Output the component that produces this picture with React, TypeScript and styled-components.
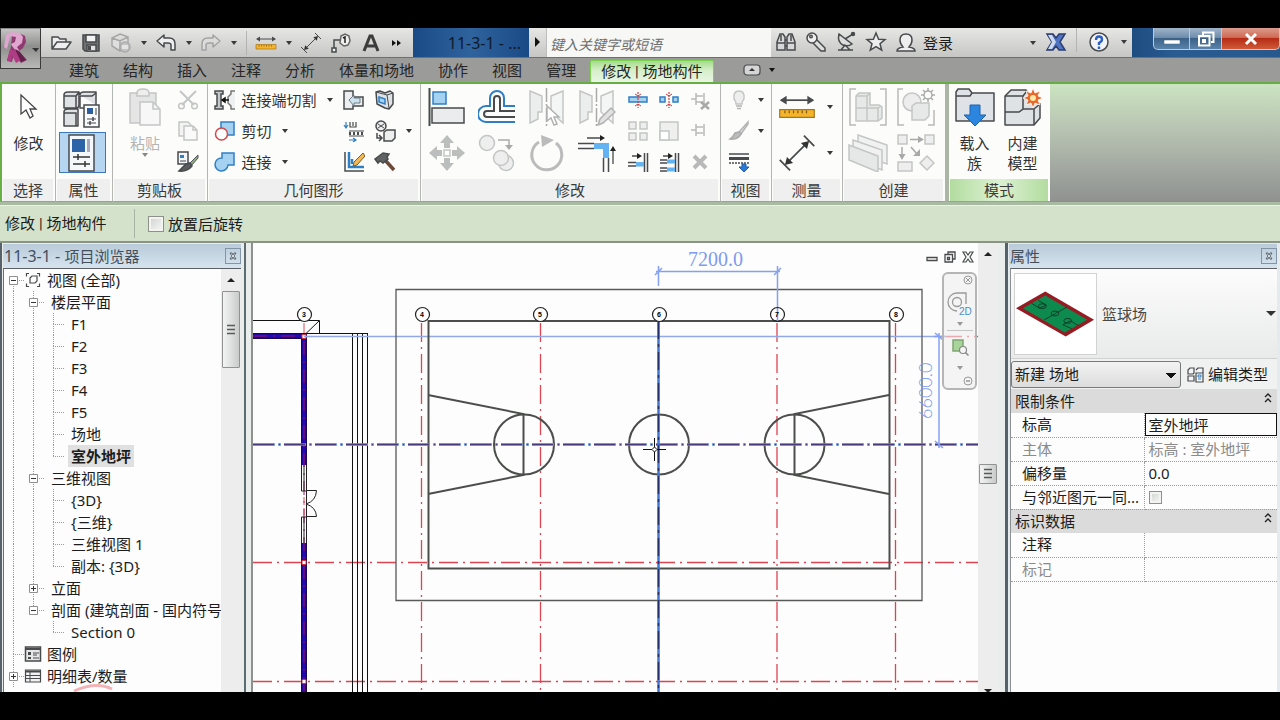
import React from "react";
import styled, { createGlobalStyle, css } from "styled-components";

const Global = createGlobalStyle`
  * { box-sizing: border-box; }
  html, body { margin: 0; background: #000; }
  body, button, input, select, table {
    font-family: "Noto Sans", "Noto Sans CJK SC", sans-serif;
    font-size: 15px;
    line-height: 22px;
    color: #1c1c1c;
  }
  button { border: 0; padding: 0; background: none; cursor: pointer; }
`;

const DARK = "#484a4c";
const PALE = "#c4c6c5";
const BLUE = "#2f7fc4";
const SKY = "#a5d2f0";

/* ---------- page frame ---------- */

const Page = styled.div`
  display: flex;
  flex-direction: column;
  height: 100vh;
  padding: 28px 0;
  background: #000;
  overflow: hidden;
`;

const Header = styled.header`
  display: flex;
  flex: none;
  background: #9b9b9a;
`;

const AppButton = styled.button`
  display: flex;
  align-items: center;
  justify-content: center;
  width: 41px;
  height: 41px;
  flex: none;
  border: 1px solid #3a3a3a;
  border-top-color: #888;
  background: linear-gradient(#c4c4c3, #8e8e8d 45%, #b9b9b8);
`;

const HeaderRows = styled.div`
  flex: 1;
  min-width: 0;
`;

const TitleBar = styled.div`
  display: flex;
  height: 30px;
  border-bottom: 1px solid #6f6f6f;
  background: linear-gradient(#e6e6e5, #c6c6c5);
`;

const QuickBar = styled.div`
  display: flex;
  align-items: center;
  padding: 0 5px;
  flex: none;
`;

const IconButton = styled.button<{ $w?: number; $h?: number }>`
  display: inline-flex;
  align-items: center;
  justify-content: center;
  flex: none;
  width: ${(p) => p.$w ?? 30}px;
  height: ${(p) => p.$h ?? 28}px;
`;

const Divider = styled.span<{ $h?: number }>`
  width: 1px;
  height: ${(p) => p.$h ?? 24}px;
  margin: 0 4px 0 5px;
  flex: none;
  background: #b3b3b2;
`;

const DocTitle = styled.h1`
  margin: 0;
  width: 116px;
  flex: none;
  padding-right: 8px;
  text-align: right;
  font-size: 16px;
  font-weight: 400;
  line-height: 30px;
  color: #0d1a2a;
  background: linear-gradient(90deg, #1a4a86, #2f639e 50%, #1a4a86);
`;

const Search = styled.input`
  flex: 1;
  min-width: 60px;
  border: 0;
  border-left: 1px solid #bdbdbd;
  padding: 4px 3px 0;
  background: #f7f8f6;
  font-style: italic;
  font-size: 14px;
  &::placeholder { color: #6d6d6d; opacity: 1; }
`;

const LoginButton = styled.button`
  display: flex;
  align-items: center;
  width: 150px;
  flex: none;
  gap: 2px;
  padding: 0 5px 0 0;
  span { flex: 1; text-align: left; }
`;

const WindowArea = styled.div`
  display: flex;
  align-items: flex-start;
  justify-content: flex-end;
  width: 148px;
  flex: none;
  background: linear-gradient(90deg, #1d4c80, #2a5c92 30%, #27598f);
`;

const WindowButton = styled.button<{ $close?: boolean; $w: number }>`
  display: flex;
  align-items: center;
  justify-content: center;
  width: ${(p) => p.$w}px;
  height: 22px;
  border: 1px solid #b9cbdc;
  border-top: 0;
  border-left-width: ${(p) => (p.$w === 37 ? 1 : 0)}px;
  border-radius: ${(p) => (p.$close ? "0 0 5px 0" : p.$w === 37 ? "0 0 0 5px" : "0")};
  background: ${(p) =>
    p.$close
      ? "linear-gradient(#dc9c8c, #cf6a55 45%, #b62c16 50%, #cf5a38)"
      : "linear-gradient(#9fb4c9, #6f8dac 45%, #3c6288 50%, #5b82a8)"};
`;

const Tabs = styled.nav`
  display: flex;
  align-items: flex-end;
  height: 24px;
  padding-left: 16px;
`;

const Tab = styled.button<{ $on?: boolean }>`
  height: 24px;
  padding: 0 12px;
  flex: none;
  white-space: nowrap;
  line-height: 24px;
  color: #262626;
  ${(p) =>
    p.$on &&
    css`
      height: 22px;
      line-height: 21px;
      padding: 0 10px;
      margin-left: 2px;
      border: 1px solid #79d14f;
      border-bottom: 0;
      border-radius: 2px 2px 0 0;
      background: linear-gradient(#a5dc8c, #d6efca 45%, #e9f5e3);
    `}
`;

const TabToggle = styled.button`
  display: flex;
  align-items: center;
  gap: 8px;
  height: 24px;
  margin-left: 29px;
`;

const Pipe = styled.span`
  font-family: Roboto, sans-serif;
`;

/* ---------- ribbon ---------- */

const Ribbon = styled.section`
  display: flex;
  flex: none;
  border-top: 2px solid #67ad45;
  border-bottom: 3px solid #a9baa2;
  background: linear-gradient(#cbe4c0, #b7c2b2 40%, #8f9190);
`;

const Panel = styled.div<{ $w: number; $mode?: boolean }>`
  display: flex;
  flex-direction: column;
  width: ${(p) => p.$w}px;
  flex: none;
  border-left: ${(p) => (p.$mode ? 4 : 1)}px solid ${(p) => (p.$mode ? "#aab5a5" : "#b4b6b3")};
  border-bottom: 1px solid #76c24f;
  background: #fcfdfb;
  &:first-child { border-left: 2px solid #68b046; }
`;

const PanelBody = styled.div<{ $pad?: string }>`
  display: flex;
  height: 95px;
  padding: ${(p) => p.$pad ?? "0"};
  justify-content: center;
`;

const PanelName = styled.div<{ $mode?: boolean }>`
  height: 22px;
  margin: 0 2px 0 1px;
  text-align: center;
  color: #3a3a3a;
  background: ${(p) => (p.$mode ? "linear-gradient(90deg, #b3dca0, #dcf2d2 50%, #b3dca0)" : "#eeefee")};
`;

const Stack = styled.div`
  display: flex;
  flex-direction: column;
  align-items: center;
`;

const Cells = styled.div<{ $cols: string; $row: number }>`
  display: grid;
  grid-template-columns: ${(p) => p.$cols};
  grid-auto-rows: ${(p) => p.$row}px;
  align-content: start;
  align-items: center;
  justify-items: center;
`;

const BigButton = styled.button<{ $off?: boolean }>`
  display: flex;
  flex-direction: column;
  align-items: center;
  width: 48px;
  line-height: 20px;
  color: ${(p) => (p.$off ? "#b4b4b4" : "#333")};
  svg:first-child { margin: 4px 0 7px; }
`;

const SelectedButton = styled.button`
  display: flex;
  align-items: center;
  justify-content: center;
  width: 47px;
  height: 41px;
  border: 1px solid #3c78b4;
  background: #b5d5f1;
`;

const LabelButton = styled.button`
  display: flex;
  align-items: center;
  justify-self: start;
  gap: 6px;
  height: 30px;
  color: #333;
  white-space: nowrap;
  svg:last-child { margin-left: 4px; }
`;

const OptionsBar = styled.section`
  display: flex;
  align-items: center;
  height: 36px;
  flex: none;
  padding-left: 5px;
  border-top: 1px solid #eaf2e5;
  background: #d4e2cb;
`;

const ContextName = styled.span`
  width: 130px;
  line-height: 28px;
  border-right: 1px solid #a9b5a3;
  margin-right: 13px;
`;

const CheckLabel = styled.label`
  display: flex;
  align-items: center;
  gap: 4px;
`;

const Check = styled.input<{ $s: number }>`
  appearance: none;
  width: ${(p) => p.$s}px;
  height: ${(p) => p.$s}px;
  margin: 0;
  flex: none;
  border: 1px solid #8d918c;
  background: linear-gradient(135deg, #cfd2d0, #f7f8f7);
  box-shadow: inset 0 0 0 2px #f3f4f2;
`;

/* ---------- workspace ---------- */

const Workspace = styled.main`
  display: flex;
  flex: 1;
  min-height: 0;
  border-top: 2px solid #8b9386;
  background: #e9eeec;
`;

const Browser = styled.aside`
  display: flex;
  flex-direction: column;
  width: 246px;
  flex: none;
  border-left: 2px solid #56616b;
  border-right: 2px solid #5c6d72;
  padding: 1px 3px 0 1px;
`;

const PaneTitle = styled.header`
  display: flex;
  align-items: center;
  justify-content: space-between;
  height: 24px;
  flex: none;
  padding-left: 1px;
  color: #43505c;
  background: linear-gradient(#b9cad9, #d6e4ef);
  h2 { margin: 0; font-size: 15px; font-weight: 400; white-space: pre; }
`;

const ProjectName = styled.span`
  font-size: 16px;
`;

const CloseButton = styled.button`
  display: flex;
  align-items: center;
  justify-content: center;
  width: 16px;
  height: 16px;
  border: 1px solid #8295a6;
`;

const BrowserBody = styled.div`
  position: relative;
  display: flex;
  flex: 1;
  min-height: 0;
  overflow: hidden;
  border-top: 1px solid #5c6065;
  border-left: 1px solid #6c7075;
  background: #fdfdfd;
`;

const Tree = styled.ul`
  flex: 1;
  min-width: 0;
  margin: 0;
  padding: 0;
  list-style: none;
  overflow: hidden;
`;

const TreeRow = styled.li`
  display: flex;
  align-items: center;
  height: 22px;
  white-space: nowrap;
  svg { flex: none; }
`;

const TreeText = styled.span<{ $on?: boolean; $root?: boolean }>`
  flex: none;
  margin-left: ${(p) => (p.$root ? 5 : 4)}px;
  padding: 0 3px;
  ${(p) => p.$on && "font-weight: 700; background: #e0e0e0;"}
  ${(p) => p.$root && "padding: 0;"}
`;

const Track = styled.div<{ $spread?: boolean }>`
  display: flex;
  flex-direction: column;
  align-items: center;
  justify-content: ${(p) => (p.$spread ? "space-between" : "flex-start")};
  width: 20px;
  flex: none;
  background: #ecedec;
`;

const Thumb = styled.div<{ $h: number }>`
  display: flex;
  align-items: center;
  justify-content: center;
  width: 18px;
  height: ${(p) => p.$h}px;
  flex: none;
  border: 1px solid #8f9291;
  border-radius: 1px;
  background: linear-gradient(90deg, #f4f4f4, #c9cbca);
`;

const Annotation = styled.svg`
  position: absolute;
  left: 68px;
  bottom: 0;
`;

const CanvasFrame = styled.section`
  position: relative;
  display: flex;
  flex: 1;
  min-width: 0;
  margin-left: 5px;
  border-left: 2px solid #8d908d;
  background: #fdfdfd;
`;

const Drawing = styled.svg`
  display: block;
  flex: 1;
  min-width: 0;
  height: 100%;
`;

const ViewButtons = styled.div`
  position: absolute;
  top: 6px;
  right: 21px;
  display: flex;
`;

const NavBar = styled.div`
  position: absolute;
  top: 29px;
  right: 21px;
  display: flex;
  flex-direction: column;
  align-items: center;
  width: 35px;
  height: 118px;
  border: 2px solid #b4b5b4;
  border-radius: 6px;
  background: rgba(238, 239, 238, 0.6);
`;

const Corner = styled.button`
  display: flex;
  align-self: flex-end;
  padding: 1px 2px;
  height: 12px;
`;

const NavRule = styled.span`
  width: 26px;
  height: 1px;
  margin: 4px 0;
  background: #c4c4c4;
`;

const Properties = styled.aside`
  display: flex;
  flex-direction: column;
  width: 275px;
  flex: none;
  margin-left: 7px;
  padding: 1px 3px 0 1px;
  border-left: 3px solid #56626b;
  background: #e4eaed;
`;

const PropertiesBody = styled.div`
  flex: 1;
  min-height: 0;
  margin-left: 1px;
  border-top: 1px solid #5c6065;
  border-left: 1px solid #8b8f92;
  background: #fdfdfd;
`;

const TypeSelector = styled.button`
  display: flex;
  align-items: center;
  gap: 5px;
  width: 100%;
  height: 90px;
  padding: 0 1px 0 3px;
  border-bottom: 1px solid #d0d1d0;
  color: #484848;
  text-align: left;
  background: linear-gradient(#fcfcfc, #e9eaea);
  span { flex: 1; }
`;

const Thumbnail = styled.svg`
  border: 1px solid #d2d2d2;
  background: #fff;
`;

const InstanceRow = styled.div`
  display: flex;
  align-items: center;
  height: 30px;
  background: #f0f1f1;
`;

const InstanceSelect = styled.select`
  appearance: none;
  width: 170px;
  height: 27px;
  margin-right: 6px;
  padding: 0 3px;
  line-height: 22px;
  border: 1px solid #767979;
  border-radius: 3px;
  background:
    linear-gradient(to bottom left, #111 50%, transparent 51%) 154px 11px / 5px 5px no-repeat,
    linear-gradient(to bottom right, #111 50%, transparent 51%) 159px 11px / 5px 5px no-repeat,
    linear-gradient(#f3f3f3, #dcdcdc);
`;

const EditType = styled.button`
  display: flex;
  align-items: center;
  gap: 4px;
`;

const PropTable = styled.table`
  width: 100%;
  table-layout: fixed;
  border-collapse: collapse;
  th, td { height: 24px; padding: 0; font-weight: 400; text-align: left; white-space: nowrap; }
`;

const GroupHead = styled.th`
  background: #dadbda;
  div { display: flex; justify-content: space-between; padding: 0 5px 0 4px; }
  svg { margin-top: 3px; }
`;

const PropName = styled.th<{ $off?: boolean }>`
  border-bottom: 1px dotted #9c9c9c;
  border-right: 1px dotted #9c9c9c;
  color: ${(p) => (p.$off ? "#8b8b8b" : "#1c1c1c")};
  div { padding-left: 11px; line-height: 23px; }
`;

const PropCell = styled.td<{ $off?: boolean }>`
  border-bottom: 1px dotted #9c9c9c;
  color: ${(p) => (p.$off ? "#8b8b8b" : "#1c1c1c")};
  div { display: flex; align-items: center; padding-left: 4px; line-height: 23px; }
`;

const ValueInput = styled.input<{ $active?: boolean }>`
  display: block;
  width: 100%;
  height: 23px;
  padding: 0 4px;
  border: ${(p) => (p.$active ? "1px solid #111" : "0")};
  padding-left: ${(p) => (p.$active ? 3 : 4)}px;
  outline: 0;
  background: transparent;
`;

/* ---------- icons ---------- */

type IconProps = { w?: number; h?: number; children: React.ReactNode };
const Svg = ({ w = 22, h = 22, children }: IconProps) => (
  <svg width={w} height={h} viewBox={`0 0 ${w} ${h}`} fill="none" stroke={DARK} strokeWidth={1.5} aria-hidden="true">
    {children}
  </svg>
);

const Caret = ({ c = "#3a3a3a" }: { c?: string }) => (
  <svg width="6" height="4" viewBox="0 0 6 4" aria-hidden="true">
    <path d="M0 0h6L3 4z" fill={c} />
  </svg>
);

const Drop = ({ label, w = 15 }: { label: string; w?: number }) => (
  <IconButton $w={w} aria-label={label}>
    <Caret />
  </IconButton>
);

const Logo = () => (
  <svg width="38" height="38" viewBox="0 0 38 38" aria-hidden="true">
    <path d="M10 4l7-1 6 3 1 6-3 6-4 3 8 9-6 3-7-9-2 8-5-1 4-14z" fill="#8f3a70" />
    <path d="M4 5l5-3 9 1 3 4-1 6-5 4 3 5-4-1-4-5-1-2 4-2 1-5-6-1-2 9-1 4-3-2 2-12z" fill="#dfa6cf" />
    <path d="M8 19l5 2 6 9-5 3-4-8-1 7-4-2z" fill="#b03c86" />
    <path d="M13 19l4 2 7 9-5 2z" fill="#64204b" />
    <path d="M30 18h7l-3 4z" fill="#333" />
  </svg>
);

const OpenIcon = () => (
  <Svg>
    <path d="M2 17V5h6l2 2h6v3M2 17l5-7h14l-5 7z" fill="#eee" strokeLinejoin="round" />
  </Svg>
);
const SaveIcon = () => (
  <Svg>
    <path d="M3 3h16v16H5l-2-2z" fill="#6e7072" />
    <path d="M6 3h10v7H6z" fill="#f2f2f2" />
    <path d="M7 13h9v6H7z" fill="#e2e2e2" />
    <path d="M8 14h3v4H8z" fill={DARK} stroke="none" />
  </Svg>
);
const SyncIcon = () => (
  <Svg>
    <path d="M10 2l8 3v9l-8 5-8-5V6zM2 6l8 3 8-4M10 9v10" stroke="#a6a6a6" fill="#dedede" />
    <circle cx="15" cy="15" r="5" fill="#c2c2c2" stroke="#aaa" />
    <path d="M12 14h6M12 16h6" stroke="#eee" />
  </Svg>
);
const UndoIcon = ({ off }: { off?: boolean }) => (
  <Svg>
    <path
      d={off ? "M20 9l-7-6v3H8q-6 0-6 6v6h4v-5q0-2 3-2h4v4z" : "M2 9l7-6v3h5q6 0 6 6v6h-4v-5q0-2-3-2H9v4z"}
      fill={off ? "#dcdcdc" : "#eee"}
      stroke={off ? "#a3a3a3" : DARK}
      strokeLinejoin="round"
    />
  </Svg>
);
const RulerIcon = ({ w = 22 }: { w?: number }) => (
  <svg width={w} height={(w * 14) / 22} viewBox="0 0 22 14" fill="none" aria-hidden="true">
    <path d="M2 3h18" stroke={DARK} strokeWidth="1" />
    <path d="M1 3l4-2.500v5zM21 3l-4-2.500v5z" fill={DARK} />
    <path d="M1 8.500h20v4.500H1z" fill="#f4b52c" stroke="#a8761a" strokeWidth=".7" />
    <path d="M4 9v1.500M6.500 9v1.500M9 9v1.500M11.500 9v1.500M14 9v1.500M16.500 9v1.500" stroke="#7c5510" strokeWidth=".7" />
  </svg>
);
const AlignDimIcon = ({ w = 22 }: { w?: number }) => (
  <svg width={w} height={w} viewBox="0 0 22 22" fill="none" aria-hidden="true">
    <path d="M5 17L17 5M1 15l6 6M15 1l6 6" stroke={DARK} strokeWidth="1" />
    <path d="M4 18l1.200-4.700 3.500 3.500zM18 4l-1.200 4.700-3.500-3.500z" fill="#333" />
  </svg>
);
const TagIcon = () => (
  <Svg>
    <path d="M11 4l4-2 4 2 1 5-2 4-4 1-4-3z" fill="#f0f0f0" stroke="#666" />
    <path d="M10 8H4v9" />
    <path d="M2 16h4v4H2z" fill="#eee" />
    <path d="M13 6l2-1v6" stroke="#222" />
  </Svg>
);
const LetterIcon = () => (
  <Svg>
    <path d="M4 19L10 4h2L18 19M7 14h8" stroke="#3c3c3c" strokeWidth="3" />
  </Svg>
);
const MoreIcon = () => (
  <Svg w={10} h={8}>
    <path d="M0 1l4 3-4 3zM5 1l4 3-4 3z" fill="#111" stroke="none" />
  </Svg>
);
const BinocularsIcon = () => (
  <Svg>
    <path d="M2 11l3-8h3l2 3v13H2zM20 11l-3-8h-3l-2 3v13h8z" fill="#d8d8d8" />
    <path d="M10 9h2M2 12h8M12 12h8M10 15h2M6 4v6M16 4v6" />
  </Svg>
);
const KeyIcon = () => (
  <Svg>
    <path d="M11 8l9 9v3h-4l-8-8" fill="#ddd" />
    <circle cx="7" cy="7" r="5" fill="#eee" />
    <circle cx="6" cy="5.500" r="1.300" />
  </Svg>
);
const DishIcon = () => (
  <Svg>
    <path d="M4 3q-2 8 4 11 5 2 9-1zM10 8l8-5M6 19l4-5 5 5zM3 19h15" fill="#ddd" />
    <circle cx="18" cy="3" r="1.500" fill={DARK} />
  </Svg>
);
const StarIcon = () => (
  <Svg>
    <path d="M11 2l2.600 6.200 6.400.4-5 4.200 1.700 6.400L11 15.700l-5.700 3.500L7 12.800 2 8.600l6.400-.4z" fill="#eee" />
  </Svg>
);
const UserIcon = () => (
  <Svg>
    <path d="M2 19q0-3 6-4-3-3-3-7 0-6 6-6t6 6q0 4-3 7 6 1 6 4z" fill="#eee" />
  </Svg>
);
const ExchangeIcon = () => (
  <Svg>
    <path d="M2 3h6l3 4 3-4h6l-5 8 5 8h-6l-3-4-3 4H2l5-8z" fill="#4f74c4" stroke="#2c3d6e" />
    <path d="M3 4h4l4 7-4 7H3l4-7z" fill="#cfd9ef" stroke="none" />
  </Svg>
);
const HelpIcon = () => (
  <Svg>
    <circle cx="11" cy="11" r="9" fill="#f2f4f8" />
    <path d="M8 9q0-3.500 3-3.500T14 8.500q0 2-3 3.500v2M11 15.500V18" stroke="#2b5fc0" strokeWidth="2.400" />
  </Svg>
);

const PointerIcon = () => (
  <Svg w={24} h={38}>
    <path d="M4 7v19l5-4 4 8 3-2-3-7h6z" fill="#fff" stroke="#444" strokeWidth="1.300" />
  </Svg>
);
const TypePropsIcon = () => (
  <Svg w={38} h={38}>
    <path d="M1 4q0-3 4-3h11v13q0 3-3 3H1zM17 4q0-3 4-3h12v13M1 21q0-3 4-3h10v17H1z" fill="#dfe2e4" strokeLinejoin="round" />
    <path d="M1 5h12v12M17 5h12l4-3M13 5l3-4M1 22h12v13M17 5v12h4" />
    <path d="M21 14h15v22H21z" fill="#f8fafb" />
    <path d="M24 17h6v6h-6z" fill="#2d5f9e" stroke="none" />
    <path d="M33 17v7M24 28h9M24 32h9" strokeWidth="1" />
    <path d="M30 26v4M27 30v4" />
  </Svg>
);
const PropsIcon = () => (
  <Svg w={28} h={38}>
    <path d="M1 1h25v36H1z" fill="#f5f8fa" />
    <path d="M4 5h13v13H4z" fill="#2d64a8" stroke="none" />
    <path d="M19 5h3v13h-3z" fill="#aab" stroke="none" />
    <path d="M5 23h17M5 30h17M10 20v6M17 27v6" stroke="#333" />
  </Svg>
);
const PasteIcon = () => (
  <Svg w={34} h={38}>
    <path d="M2 5h26v30H2z" fill="#e4e5e4" stroke={PALE} />
    <path d="M9 5q0-4 6-4t6 4v3H9z" fill="#eee" stroke={PALE} />
    <path d="M12 14h13l7 7v16H12z" fill="#f7f7f7" stroke={PALE} />
    <path d="M25 14v7h7" stroke={PALE} />
  </Svg>
);
const CutIcon = () => (
  <Svg>
    <path d="M3 2l14 14M19 2L5 16" stroke={PALE} strokeWidth="2" />
    <circle cx="4.500" cy="17" r="2.800" stroke={PALE} />
    <circle cx="17.500" cy="17" r="2.800" stroke={PALE} />
  </Svg>
);
const CopyIcon = () => (
  <Svg>
    <path d="M2 2h9l3 3v11H2z" stroke={PALE} fill="#f3f3f3" />
    <path d="M7 6h9l4 4v10H7zM16 6v4h4" stroke={PALE} fill="#fafafa" />
  </Svg>
);
const MatchIcon = () => (
  <Svg>
    <path d="M1 1h10v12H1z" fill="#f3f6f8" />
    <path d="M3 4h4v3H3z" fill={BLUE} stroke="none" />
    <path d="M3 10h6" strokeWidth="1" />
    <path d="M21 4l-9 9 2 2 7-8z" fill="#8cae6e" stroke="#556" strokeWidth="1" />
    <path d="M13 12l-4 1q-3 3-7 7 8 1 13-5z" fill="#5a5c5e" />
  </Svg>
);
const CopeIcon = () => (
  <Svg>
    <path d="M1 2h8v3H7v12h2v3H1v-3h2V5H1z" fill="#c6c9cb" />
    <path d="M21 2h-4v3l-3 3v6l3 3v3h4" fill="#eef0f1" stroke="#777" />
    <path d="M8 11h7M8 11l3-2v4z" fill="#111" stroke="#111" />
  </Svg>
);
const CutGeomIcon = () => (
  <Svg>
    <path d="M7 2h13v13H7z" fill={SKY} stroke={BLUE} />
    <circle cx="7.500" cy="14" r="6" fill="#fff" stroke="#d04848" />
  </Svg>
);
const JoinIcon = () => (
  <Svg>
    <path d="M8 2h12v12h-6a6.500 6.500 0 1 1-6-7z" fill={SKY} stroke={BLUE} />
  </Svg>
);
const SplitFaceIcon = () => (
  <Svg>
    <path d="M1 2h9v6h10v9H10v3H1z" fill="#eceeef" />
    <path d="M6 11l5-5v3h6v5h-6v3z" fill="#cfe3ee" stroke="#6b7a84" strokeWidth="1" />
  </Svg>
);
const PaintIcon = () => (
  <Svg>
    <path d="M2 3l4-1 5 2 5-2 3 2v11l-4 5-4-1-8-4z" fill="#dfe3e6" strokeLinejoin="round" />
    <path d="M2 3l11 3 6-2M13 6l2 13" strokeWidth="1" />
    <path d="M5 8l6 2v5l-6-2z" fill={SKY} stroke={BLUE} />
  </Svg>
);
const WallJoinIcon = () => (
  <Svg>
    <path d="M3 2v5M1 5l2 3 2-3M6 20h6M10 18l3 2-3 2" stroke={BLUE} strokeWidth="1.200" />
    <path d="M7 2v5h6V2M10 2v4M6 11h15M6 16h15" strokeWidth="1.200" />
    <path d="M6 13.500h15" strokeWidth="3" strokeDasharray="2 2" />
  </Svg>
);
const DemolishIcon = () => (
  <Svg>
    <circle cx="7" cy="6" r="5" fill="#ececec" />
    <path d="M4 4l6 4M4 8l6-4" strokeWidth="1" />
    <path d="M3 13v5h4M5 15l3 3-3 3" />
    <path d="M10 12l3-2h8v8l-3 3h-8z" fill="#eee" />
  </Svg>
);
const BeamIcon = () => (
  <Svg>
    <path d="M2 1v19h19" strokeWidth="1.500" />
    <path d="M6 1v15h15M9 8v5M13 16h8" stroke={BLUE} strokeWidth="2.500" />
    <path d="M20 2l-9 9-1 4 4-1 8-9z" fill="#f2b956" stroke="#7b5a26" strokeWidth="1" />
  </Svg>
);
const HammerIcon = () => (
  <Svg>
    <path d="M11 9l9 10" stroke="#6b4a3a" strokeWidth="3.500" />
    <path d="M1 8l8-6 6 1-2 3 1 2-5 4-3-2-2 2z" fill="#606264" />
  </Svg>
);

const AlignIcon = () => (
  <Svg w={38} h={38}>
    <path d="M1.500 0v38" strokeWidth="2" />
    <path d="M5 4h13v12H5z" fill={SKY} stroke={BLUE} />
    <path d="M4 20h32v15H4z" fill="#ebecee" />
  </Svg>
);
const OffsetIcon = () => (
  <Svg w={38} h={38}>
    <path d="M37 18H26V10a7 7 0 0 0-14 0v8H8a8 8 0 0 0 0 16h29" stroke={BLUE} strokeWidth="2" />
    <path d="M37 23H22V11a3 3 0 0 0-6 0v12H9a3 3 0 0 0 0 6h28" strokeWidth="2" />
  </Svg>
);
const MirrorIcon = ({ draw }: { draw?: boolean }) => (
  <Svg w={38} h={38}>
    <path d="M2 3l12 5v16h-4v7l-8 4z" fill="#eceded" stroke={PALE} />
    <path d="M35 3l-12 5v16l12 11z" fill="#f4f5f5" stroke={PALE} />
    <path d="M18.500 0v38" stroke="#aaa" strokeDasharray="14 2 2 2" />
    {draw ? (
      <path d="M20 37l2-6 11-11 4 4-12 11z" fill="#e2e2e2" stroke="#b2b2b2" />
    ) : (
      <path d="M19 18v15l4-3 3 7 3-1-3-7h5z" fill="#fff" stroke="#b2b2b2" />
    )}
  </Svg>
);
const MoveIcon = () => (
  <Svg w={38} h={38}>
    <path
      d="M19 1l7 8h-4v5h-6V9h-4zM19 37l7-8h-4v-5h-6v5h-4zM1 19l8-7v4h5v6H9v4zM37 19l-8-7v4h-5v6h5v4z"
      fill="#bcbdbd"
      stroke="none"
    />
    <path d="M16 16h6v6h-6z" stroke={PALE} fill="#fff" />
  </Svg>
);
const CopyMoveIcon = () => (
  <Svg w={38} h={38}>
    <circle cx="9" cy="9" r="7.500" fill="#eee" stroke={PALE} />
    <path d="M20 6h11v7" stroke="#aaa" />
    <path d="M27 11h8l-4 5z" fill="#aaa" stroke="none" />
    <circle cx="28" cy="29" r="7.500" fill="#eee" stroke={PALE} />
    <circle cx="23" cy="24" r="7.500" fill="#eee" stroke={PALE} />
  </Svg>
);
const RotateIcon = () => (
  <Svg w={38} h={38}>
    <path d="M28 9a15 15 0 1 1-17-1" stroke="#bbb" strokeWidth="3" />
    <path d="M13 1l13 5-12 7z" fill="#bbb" stroke="none" />
  </Svg>
);
const TrimIcon = () => (
  <Svg w={38} h={38}>
    <path d="M0 9.500h16M0 14.500h16M25.500 24v14M30.500 24v14" strokeWidth="1.500" />
    <path d="M16 12h12v12" stroke="#63b3f2" strokeWidth="6" />
    <path d="M9 4h14M35 16v14" strokeWidth="1.300" />
    <path d="M22 1l5 3-5 3zM32 17l3-5 3 5z" fill="#222" stroke="none" />
  </Svg>
);
const SplitIcon = ({ gap }: { gap?: boolean }) => (
  <Svg>
    <path d={gap ? "M2 8h5v5H2zM15 8h5v5h-5z" : "M2 8h18v5H2z"} fill={SKY} stroke={BLUE} />
    <path d="M11 3v16" stroke="#d23c3c" strokeDasharray="2 1" strokeWidth="1.200" />
    <path d="M8 5l3 2 3-2M8 17l3-2 3 2" stroke="#d23c3c" strokeWidth="1" />
  </Svg>
);
const PinIcon = ({ off }: { off?: boolean }) => (
  <Svg>
    <path d="M2 10h5M7 4v12M7 7h7M7 13h7M15 4v12" stroke="#b9b9b9" />
    {off && <path d="M12 13l8 7M20 13l-8 7" stroke="#a8a8a8" strokeWidth="2.500" />}
  </Svg>
);
const ArrayIcon = () => (
  <Svg>
    <path d="M2 2h7v7H2zM13 2h7v7h-7zM2 13h7v7H2zM13 13h7v7h-7z" fill="#eee" stroke={PALE} />
  </Svg>
);
const ScaleIcon = () => (
  <Svg>
    <path d="M2 2h18v18H2z" fill="#efefef" stroke={PALE} />
    <path d="M2 11h9v9H2z" fill="#fff" stroke={PALE} />
  </Svg>
);
const ExtendIcon = ({ multi }: { multi?: boolean }) => (
  <Svg>
    <path d="M17.500 2v19M20.500 2v19" strokeWidth="1.500" />
    <path d="M5 5h6" />
    <path d="M10 2l5 3-5 3z" fill="#222" stroke="none" />
    {multi ? (
      <>
        <path d="M2 9h7M2 12h7M2 17h7M2 20h7" />
        <path d="M9 10.500h8M9 18.500h8" stroke="#63b3f2" strokeWidth="4" />
      </>
    ) : (
      <>
        <path d="M1 11.500h8M1 15h8" />
        <path d="M9 13.300h8" stroke="#63b3f2" strokeWidth="4.500" />
      </>
    )}
  </Svg>
);
const DeleteIcon = () => (
  <Svg>
    <path d="M5 5l12 12M17 5L5 17" stroke="#b9b9b9" strokeWidth="4" />
  </Svg>
);
const BulbIcon = () => (
  <Svg>
    <path d="M8 15q0-3-2-5-1-8 5-8t5 8q-2 2-2 5z" fill="#eee" stroke={PALE} />
    <path d="M8 17h6M9 19.500h4" stroke="#b4b4b4" />
  </Svg>
);
const BrushIcon = () => (
  <Svg>
    <path d="M20 2l-9 10 2 2 7-10z" fill="#ddd" stroke="#b5b5b5" />
    <path d="M11 12l-4 1q-2 4-5 6 8 1 11-5z" fill="#bcbcbc" stroke="#aaa" />
  </Svg>
);
const LineworkIcon = () => (
  <Svg>
    <path d="M1 3h20" />
    <path d="M1 7.500h20" strokeWidth="3" />
    <path d="M1 12h20" strokeDasharray="2 1" />
    <path d="M14 13h4v3h3l-5 5-5-5h3z" fill="#2a7bd8" stroke="#1f5ca8" strokeWidth="1" />
  </Svg>
);
const GroupIcon = () => (
  <Svg w={38} h={38}>
    <path d="M7 1H1v36h6M31 1h6v36h-6" stroke="#b9b9b9" />
    <path d="M7 8l3-3h11v12h9l3 2v11l-4 3H7z" fill="#e7e8e8" stroke={PALE} />
    <path d="M7 8h11l3-3M18 8v25M7 20h22v13M29 20l3-2" stroke={PALE} />
  </Svg>
);
const SimilarIcon = () => (
  <Svg w={38} h={38}>
    <path d="M6 1H1v36h6M31 37h6V22" stroke="#b9b9b9" />
    <circle cx="15" cy="14" r="9" fill="#ededed" stroke={PALE} />
    <path d="M15 18l4-3h13v13l-4 4H15z" fill="#e7e8e8" stroke={PALE} />
    <circle cx="31" cy="7" r="4" stroke="#aaa" />
    <path d="M31 0v3M31 11v3M24 7h3M35 7h3M26 2l2 2M36 2l-2 2M26 12l2-2M36 12l-2-2" stroke="#aaa" />
  </Svg>
);
const PartsIcon = () => (
  <Svg w={42} h={38}>
    <path d="M11 1l29 10v19l-29-10z" fill="#f1f1f1" stroke={PALE} />
    <path d="M6 6l29 10v20l-29-12z" fill="#f1f1f1" stroke={PALE} />
    <path d="M2 11l29 11v16L2 26z" fill="#e6e7e7" stroke={PALE} />
  </Svg>
);
const AssemblyIcon = () => (
  <Svg w={38} h={38}>
    <path d="M1 1h9v9H1zM28 1h9v9h-9zM1 28h14v9H1zM30 22l7 7-7 7-7-7z" fill="#eee" stroke={PALE} />
    <path d="M13 5.500h9M5 13v8M14 13l6 7" stroke="#a9a9a9" strokeWidth="1.500" />
    <path d="M21 2l6 3.500-6 3.500zM1.500 20h7L5 26zM16 22h7v-7z" fill="#a9a9a9" stroke="none" />
  </Svg>
);
const LoadFamilyIcon = () => (
  <Svg w={40} h={38}>
    <path d="M1 33V4l2-3h11l3 4h22v28z" fill="#dfe2e6" strokeLinejoin="round" />
    <path d="M1 8h14l2-3" />
    <path d="M15 17h10v10h6L20 38 9 27h6z" fill="#2c86e0" stroke="#1d62ad" strokeWidth="1" />
  </Svg>
);
const InPlaceIcon = () => (
  <Svg w={38} h={38}>
    <path d="M1 8l6-6h15l6 10 8 4v14l-6 7H1z" fill="#dfe2e4" strokeLinejoin="round" />
    <path d="M1 24h14l4-3V8M1 8h18l4-5M19 21h11v16M30 21l6-5" />
    <path
      d="M29 0l2 5 5-2-2 5 5 2-5 2 2 5-5-2-2 5-2-5-5 2 2-5-5-2 5-2-2-5 5 2z"
      fill="#e8682a"
      stroke="#fff"
      strokeWidth=".8"
    />
    <circle cx="29" cy="10" r="3" fill="#ffe9a8" stroke="none" />
  </Svg>
);
const SmallCross = () => (
  <Svg w={8} h={8}>
    <path d="M1 1h2l1 2 1-2h2L5 4l2 3H5L4 5 3 7H1l2-3z" stroke="#4c5863" strokeWidth=".9" fill="#eef3f7" />
  </Svg>
);
const CourtThumb = () => (
  <Thumbnail width="83" height="82" viewBox="0 0 83 82" aria-hidden="true">
    <path d="M31 18L1 35l51 29 29-17z" fill="#961b22" />
    <path d="M31 22L8 35l43 25 23-13z" fill="#0d8a4e" />
    <g fill="none" stroke="#123d27" strokeWidth="1">
      <path d="M53 34L30 47M17 30l8 5 7-3-8-5M65 53l-8-5-8 4 9 4" />
      <ellipse cx="41" cy="40.500" rx="4" ry="2.500" />
      <ellipse cx="28" cy="33" rx="4" ry="2.500" />
      <ellipse cx="54" cy="48" rx="4" ry="2.500" />
    </g>
  </Thumbnail>
);
const Chevrons = () => (
  <Svg w={8} h={10}>
    <path d="M1 4l3-3 3 3M1 9l3-3 3 3" stroke="#222" strokeWidth="1.400" />
  </Svg>
);
const UpArrow = () => (
  <Svg w={10} h={22}>
    <path d="M1 13l4-4 4 4z" fill="#222" stroke="none" />
  </Svg>
);
const Grip = () => (
  <Svg w={10} h={12}>
    <path d="M1 1.500h8M1 5.500h8M1 9.500h8" stroke="#5a5a5a" strokeWidth="1.300" />
  </Svg>
);

/* ---------- project browser ---------- */

type Guide = "none" | "line" | "tee" | "end" | "open" | "closed" | "openLast" | "first";
type Node = { text: string; cells: Guide[]; icon?: "views" | "legend" | "sheet"; on?: boolean };

const NODES: Node[] = [
  { text: "视图 (全部)", cells: ["first"], icon: "views" },
  { text: "楼层平面", cells: ["line", "open"] },
  { text: "F1", cells: ["line", "line", "tee"] },
  { text: "F2", cells: ["line", "line", "tee"] },
  { text: "F3", cells: ["line", "line", "tee"] },
  { text: "F4", cells: ["line", "line", "tee"] },
  { text: "F5", cells: ["line", "line", "tee"] },
  { text: "场地", cells: ["line", "line", "tee"] },
  { text: "室外地坪", cells: ["line", "line", "end"], on: true },
  { text: "三维视图", cells: ["line", "open"] },
  { text: "{3D}", cells: ["line", "line", "tee"] },
  { text: "{三维}", cells: ["line", "line", "tee"] },
  { text: "三维视图 1", cells: ["line", "line", "tee"] },
  { text: "副本: {3D}", cells: ["line", "line", "end"] },
  { text: "立面", cells: ["line", "closed"] },
  { text: "剖面 (建筑剖面 - 国内符号)", cells: ["line", "openLast"] },
  { text: "Section 0", cells: ["line", "none", "end"] },
  { text: "图例", cells: ["tee"], icon: "legend" },
  { text: "明细表/数量", cells: ["closed"], icon: "sheet" },
];

const GuideCell = ({ kind }: { kind: Guide }) => {
  const box = kind === "open" || kind === "closed" || kind === "openLast" || kind === "first";
  const top = kind !== "none" && kind !== "first";
  const bottom = kind === "line" || kind === "tee" || kind === "open" || kind === "closed" || kind === "first";
  return (
    <svg width="20" height="22" viewBox="0 0 20 22" fill="none" aria-hidden="true">
      <g stroke="#9b9b9b" strokeDasharray="1 1">
        {top && <path d="M9.500 0v11" />}
        {bottom && <path d="M9.500 11v11" />}
        {kind !== "line" && kind !== "none" && <path d="M9 11.500h11" />}
      </g>
      {box && (
        <>
          <path d="M5.500 7.500h8v8h-8z" fill="#fff" stroke="#8f8f8f" />
          <path d="M7 11.500h5" stroke="#333" />
          {kind === "closed" && <path d="M9.500 9v5" stroke="#333" />}
        </>
      )}
    </svg>
  );
};

const NodeIcon = ({ kind }: { kind: "views" | "legend" | "sheet" }) => (
  <Svg w={18} h={16}>
    {kind === "views" && (
      <>
        <path d="M5 1.500H2.500v3M13 1.500h2.500v3M5 14.500H2.500v-3M13 14.500h2.500v-3" strokeWidth="1.200" />
        <path d="M6 6l2-2h5v5l-2 2H6z" strokeWidth="1.200" />
      </>
    )}
    {kind === "legend" && (
      <>
        <path d="M1.500 1h15v14h-15z" fill="#e6e7e7" />
        <path d="M2 3h14" strokeWidth="2" />
        <path d="M4 6h3v3H4zM4 11h3v2H4z" fill={DARK} stroke="none" />
        <path d="M9 7h6M9 9h4M9 12h6" strokeWidth="1" />
      </>
    )}
    {kind === "sheet" && (
      <>
        <path d="M1.500 2h15v12h-15z" fill="#f2f2f2" strokeWidth="1.200" />
        <path d="M2 3.500h14" strokeWidth="2" />
        <path d="M2 7.500h15M2 10.500h15M6 4v10" strokeWidth="1" />
      </>
    )}
  </Svg>
);

/* ---------- plan drawing ---------- */

const BUBBLES: [number, string][] = [
  [304, "3"],
  [422, "4"],
  [540, "5"],
  [659, "6"],
  [777, "7"],
  [896, "8"],
];

const Plan = () => (
  <Drawing viewBox="253 243 725 449" preserveAspectRatio="xMinYMin slice" fill="none" role="img" aria-label="室外地坪">
    <g stroke="#dd4452" strokeWidth="1.300">
      <path strokeDasharray="19 5 2 5" d="M421.500 323V700M540.500 323V700M777 323V700M895.500 323V700M253 562.500H1000M253 681.500H1000M943 336.500H1000" />
    </g>
    <g stroke="#111">
      <path d="M253 320.500H319.500V333.500M306 333.500L319 321M306 333.500H367.500M352.500 333V700M357.500 333V700M362.500 333V700M367.500 333V700" />
    </g>
    <path d="M253 336H304V465M304 543V700" stroke="#160a52" strokeWidth="6" />
    <path d="M253 336H304V465M304 543V700" stroke="#2408b8" strokeWidth="3.500" />
    <path d="M253 336H304V700" stroke="#a01060" strokeWidth="1" strokeDasharray="14 6 2 6" />
    <path d="M301.500 465V491H306.500V465M304 465V491M301.500 543V517H306.500V543M304 517V543" stroke="#222" />
    <path d="M304 497V515" stroke="#e04a58" strokeDasharray="8 3" />
    <path d="M306.500 491V517M306 490.500H316.500Q316 501 306 504Q316 507 316.500 516.500H306" stroke="#222" />
    <path d="M302 334.500h4v4h-4zM302 560.500h4v4h-4zM302 679.500h4v4h-4z" fill="#fff" stroke="#d03038" />

    <path d="M304 336.500H943" stroke="#92a9e6" strokeWidth="1.300" />
    <path d="M396 289.500H922V600.500H396Z" stroke="#585a58" strokeWidth="1.300" />
    <g stroke="#4c4e4c" strokeWidth="2">
      <path d="M428.500 321H889.500V568.500H428.500Z" />
      <path d="M428 395L523.500 414V475L428 494M889 395L794.500 414V475L889 494" />
      <circle cx="524" cy="444.500" r="30" />
      <circle cx="659" cy="444.500" r="30" />
      <circle cx="794.500" cy="444.500" r="30" />
    </g>

    <path d="M253 444.500H1000" stroke="#6f97dc" strokeWidth="2.500" strokeDasharray="22 3 3 3" />
    <path d="M253 444.500H1000" stroke="#483a7c" strokeWidth="1.300" strokeDasharray="21 5 1 4" />
    <path d="M658.500 321V700" stroke="#3f74d4" strokeWidth="2.500" />
    <path d="M658.500 321V700" stroke="#23306e" strokeWidth="1.500" strokeDasharray="18 5 3 5" />

    <g stroke="#86a1f0" strokeWidth="1.500">
      <path d="M656 271.500H780M658.500 266V286M777.500 266V321M655 275L662 268M774 275L781 268" />
      <path d="M939 333V448M935 333L943 340M935 441L943 448M934 336.500H945" />
    </g>
    <g fill="#7f9af0">
      <text x="688" y="266" fontSize="20" fontFamily="Liberation Serif, serif">7200.0</text>
      <text transform="translate(932 419) rotate(-90)" fontSize="18" fontWeight="300" fontFamily="Lato, sans-serif">
        6600.0
      </text>
    </g>

    {BUBBLES.map(([x, n]) => (
      <g key={n}>
        <circle cx={x + 0.5} cy="314.500" r="7" stroke="#222" strokeWidth="1.200" fill={n === "7" ? "none" : "#fff"} />
        <text x={x} y="317" fill="#000" fontSize="7" fontWeight="700" textAnchor="middle" fontFamily="Liberation Sans, sans-serif">
          {n}
        </text>
      </g>
    ))}
    <path d="M304 323V333" stroke="#e04a58" />
    <path d="M643 449.500H652M657 449.500H666M654.500 438V447M654.500 452V461M652 449.500l2.500-2.500 2.500 2.500-2.500 2.500z" stroke="#111" />
  </Drawing>
);

/* ---------- page ---------- */

const TABS = ["建筑", "结构", "插入", "注释", "分析", "体量和场地", "协作", "视图", "管理"];

export default function App() {
  return (
    <Page>
      <Global />
      <Header>
        <AppButton aria-label="应用程序菜单">
          <Logo />
        </AppButton>
        <HeaderRows>
          <TitleBar>
            <QuickBar>
              <IconButton aria-label="打开"><OpenIcon /></IconButton>
              <IconButton aria-label="保存"><SaveIcon /></IconButton>
              <IconButton aria-label="同步"><SyncIcon /></IconButton>
              <Drop label="同步选项" />
              <IconButton aria-label="放弃"><UndoIcon /></IconButton>
              <Drop label="放弃列表" />
              <IconButton aria-label="重做"><UndoIcon off /></IconButton>
              <Drop label="重做列表" />
              <Divider />
              <IconButton aria-label="测量"><RulerIcon /></IconButton>
              <Drop label="测量选项" />
              <IconButton aria-label="对齐尺寸标注"><AlignDimIcon /></IconButton>
              <IconButton aria-label="按类别标记"><TagIcon /></IconButton>
              <IconButton aria-label="文字"><LetterIcon /></IconButton>
              <IconButton $w={22} aria-label="更多"><MoreIcon /></IconButton>
            </QuickBar>
            <DocTitle>11-3-1 - ...</DocTitle>
            <IconButton $w={17} aria-label="展开搜索">
              <Svg w={6} h={10}><path d="M0 0l5 5-5 5z" fill="#111" stroke="none" /></Svg>
            </IconButton>
            <Search placeholder="键入关键字或短语" aria-label="搜索" />
            <IconButton aria-label="搜索"><BinocularsIcon /></IconButton>
            <IconButton aria-label="速博"><KeyIcon /></IconButton>
            <IconButton aria-label="通讯中心"><DishIcon /></IconButton>
            <IconButton aria-label="收藏夹"><StarIcon /></IconButton>
            <LoginButton>
              <IconButton as="i"><UserIcon /></IconButton>
              <span>登录</span>
              <Caret />
            </LoginButton>
            <IconButton aria-label="Exchange"><ExchangeIcon /></IconButton>
            <Divider />
            <IconButton $w={35} aria-label="帮助"><HelpIcon /></IconButton>
            <Drop label="帮助选项" w={16} />
            <WindowArea>
              <WindowButton $w={37} aria-label="最小化">
                <Svg w={16} h={10}><path d="M0 6h16v4H0z" fill="#fff" stroke="#456" strokeWidth=".5" /></Svg>
              </WindowButton>
              <WindowButton $w={32} aria-label="还原">
                <Svg w={18} h={16}><path d="M6 4V1.500h10.500V11H14M2 5h10.500v9.500H2zM6 9h2v2H6z" stroke="#fff" strokeWidth="2" /></Svg>
              </WindowButton>
              <WindowButton $w={58} $close aria-label="关闭">
                <Svg w={16} h={14}><path d="M3 2l10 10M13 2L3 12" stroke="#fff" strokeWidth="3" /></Svg>
              </WindowButton>
            </WindowArea>
          </TitleBar>
          <Tabs>
            {TABS.map((t) => (
              <Tab key={t}>{t}</Tab>
            ))}
            <Tab $on>修改 <Pipe>|</Pipe> 场地构件</Tab>
            <TabToggle aria-label="最小化功能区">
              <Svg w={18} h={12}>
                <rect x="1" y="1" width="16" height="10" rx="3" fill="#d5d5d5" strokeWidth="1.200" />
                <path d="M6 7l3-3 3 3z" fill="#333" stroke="none" />
              </Svg>
              <Caret c="#111" />
            </TabToggle>
          </Tabs>
        </HeaderRows>
      </Header>

      <Ribbon>
        <Panel $w={55}>
          <PanelBody><BigButton><PointerIcon />修改</BigButton></PanelBody>
          <PanelName>选择</PanelName>
        </Panel>
        <Panel $w={57}>
          <PanelBody $pad="3px 4px 0 0">
            <Stack>
              <IconButton $w={47} $h={45} aria-label="类型属性"><TypePropsIcon /></IconButton>
              <SelectedButton aria-label="属性"><PropsIcon /></SelectedButton>
            </Stack>
          </PanelBody>
          <PanelName>属性</PanelName>
        </Panel>
        <Panel $w={95}>
          <PanelBody $pad="0 0 0 8px">
            <BigButton $off><PasteIcon />粘贴<Caret c="#888" /></BigButton>
            <Cells $cols="38px" $row={31}>
              <IconButton aria-label="剪切"><CutIcon /></IconButton>
              <IconButton aria-label="复制"><CopyIcon /></IconButton>
              <IconButton aria-label="匹配类型"><MatchIcon /></IconButton>
            </Cells>
          </PanelBody>
          <PanelName>剪贴板</PanelName>
        </Panel>
        <Panel $w={213}>
          <PanelBody $pad="0 0 0 2px">
            <Cells $cols="125px 31px 31px 16px" $row={31}>
              <LabelButton><CopeIcon />连接端切割<Caret /></LabelButton>
              <IconButton aria-label="拆分面"><SplitFaceIcon /></IconButton>
              <IconButton aria-label="填色"><PaintIcon /></IconButton>
              <span />
              <LabelButton><CutGeomIcon />剪切<Caret /></LabelButton>
              <IconButton aria-label="墙连接"><WallJoinIcon /></IconButton>
              <IconButton aria-label="替换"><DemolishIcon /></IconButton>
              <Drop label="替换选项" />
              <LabelButton><JoinIcon />连接<Caret /></LabelButton>
              <IconButton aria-label="梁连接"><BeamIcon /></IconButton>
              <IconButton aria-label="拆除"><HammerIcon /></IconButton>
            </Cells>
          </PanelBody>
          <PanelName>几何图形</PanelName>
        </Panel>
        <Panel $w={300}>
          <PanelBody $pad="0 4px 0 0">
            <Cells $cols="50px 50px 50px 50px" $row={46}>
              <IconButton $w={44} $h={42} aria-label="对齐"><AlignIcon /></IconButton>
              <IconButton $w={44} $h={42} aria-label="偏移"><OffsetIcon /></IconButton>
              <IconButton $w={44} $h={42} aria-label="镜像 - 拾取轴"><MirrorIcon /></IconButton>
              <IconButton $w={44} $h={42} aria-label="镜像 - 绘制轴"><MirrorIcon draw /></IconButton>
              <IconButton $w={44} $h={42} aria-label="移动"><MoveIcon /></IconButton>
              <IconButton $w={44} $h={42} aria-label="复制图元"><CopyMoveIcon /></IconButton>
              <IconButton $w={44} $h={42} aria-label="旋转"><RotateIcon /></IconButton>
              <IconButton $w={44} $h={42} aria-label="修剪"><TrimIcon /></IconButton>
            </Cells>
            <Cells $cols="31px 31px 31px" $row={31}>
              <IconButton aria-label="拆分图元"><SplitIcon /></IconButton>
              <IconButton aria-label="用间隙拆分"><SplitIcon gap /></IconButton>
              <IconButton aria-label="解锁"><PinIcon off /></IconButton>
              <IconButton aria-label="阵列"><ArrayIcon /></IconButton>
              <IconButton aria-label="缩放"><ScaleIcon /></IconButton>
              <IconButton aria-label="锁定"><PinIcon /></IconButton>
              <IconButton aria-label="延伸单个"><ExtendIcon /></IconButton>
              <IconButton aria-label="延伸多个"><ExtendIcon multi /></IconButton>
              <IconButton aria-label="删除"><DeleteIcon /></IconButton>
            </Cells>
          </PanelBody>
          <PanelName>修改</PanelName>
        </Panel>
        <Panel $w={51}>
          <PanelBody>
            <Cells $cols="30px 14px" $row={31}>
              <IconButton aria-label="隐藏"><BulbIcon /></IconButton>
              <Drop label="隐藏选项" w={14} />
              <IconButton aria-label="替换图形"><BrushIcon /></IconButton>
              <Drop label="替换图形选项" w={14} />
              <IconButton aria-label="线处理"><LineworkIcon /></IconButton>
            </Cells>
          </PanelBody>
          <PanelName>视图</PanelName>
        </Panel>
        <Panel $w={71}>
          <PanelBody>
            <Cells $cols="46px 20px" $row={46}>
              <IconButton $w={42} $h={42} aria-label="测量两点"><RulerIcon w={38} /></IconButton>
              <Drop label="测量两点选项" />
              <IconButton $w={42} $h={42} aria-label="尺寸标注"><AlignDimIcon w={38} /></IconButton>
              <Drop label="尺寸标注选项" />
            </Cells>
          </PanelBody>
          <PanelName>测量</PanelName>
        </Panel>
        <Panel $w={103}>
          <PanelBody $pad="0 4px 0 0">
            <Cells $cols="48px 48px" $row={46}>
              <IconButton $w={44} $h={42} aria-label="创建组"><GroupIcon /></IconButton>
              <IconButton $w={44} $h={42} aria-label="创建类似"><SimilarIcon /></IconButton>
              <IconButton $w={44} $h={42} aria-label="创建零件"><PartsIcon /></IconButton>
              <IconButton $w={44} $h={42} aria-label="创建部件"><AssemblyIcon /></IconButton>
            </Cells>
          </PanelBody>
          <PanelName>创建</PanelName>
        </Panel>
        <Panel $w={105} $mode>
          <PanelBody $pad="0 2px 0 0">
            <BigButton><LoadFamilyIcon />载入<br />族</BigButton>
            <BigButton><InPlaceIcon />内建<br />模型</BigButton>
          </PanelBody>
          <PanelName $mode>模式</PanelName>
        </Panel>
      </Ribbon>

      <OptionsBar>
        <ContextName>修改 <Pipe>|</Pipe> 场地构件</ContextName>
        <CheckLabel>
          <Check type="checkbox" $s={16} />
          放置后旋转
        </CheckLabel>
      </OptionsBar>

      <Workspace>
        <Browser>
          <PaneTitle>
            <h2><ProjectName>11-3-1 - </ProjectName>项目浏览器</h2>
            <CloseButton aria-label="关闭项目浏览器"><SmallCross /></CloseButton>
          </PaneTitle>
          <BrowserBody>
            <Tree>
              {NODES.map((n) => (
                <TreeRow key={n.text}>
                  {n.cells.map((c, i) => (
                    <GuideCell key={i} kind={c} />
                  ))}
                  {n.icon && <NodeIcon kind={n.icon} />}
                  <TreeText $on={n.on} $root={!!n.icon}>{n.text}</TreeText>
                </TreeRow>
              ))}
            </Tree>
            <Track>
              <UpArrow />
              <Thumb $h={77}><Grip /></Thumb>
            </Track>
            <Annotation width="42" height="9" viewBox="0 0 42 9" fill="none" aria-hidden="true">
              <path d="M2 8Q24-2 40 6" stroke="#f2b3b6" strokeWidth="3" />
            </Annotation>
          </BrowserBody>
        </Browser>

        <CanvasFrame>
          <Plan />
          <ViewButtons>
            <IconButton $w={18} $h={16} aria-label="最小化视图">
              <Svg w={12} h={10}><path d="M1 5.500h10v3H1z" strokeWidth="1.300" /></Svg>
            </IconButton>
            <IconButton $w={18} $h={16} aria-label="还原视图">
              <Svg w={12} h={12}><path d="M4 3V1h7v7H9M1 3.500h7.500V11H1zM3.500 6.500h2v2h-2z" strokeWidth="1.300" /></Svg>
            </IconButton>
            <IconButton $w={18} $h={16} aria-label="关闭视图">
              <Svg w={12} h={12}>
                <path d="M1 1h3l2 3 2-3h3L8 6l3 5H8L6 8l-2 3H1l3-5z" strokeWidth="1.200" />
              </Svg>
            </IconButton>
          </ViewButtons>
          <NavBar>
            <Corner aria-label="关闭导航栏">
              <Svg w={10} h={10}><circle cx="5" cy="5" r="4" stroke="#999" strokeWidth="1" /><path d="M3 3l4 4M7 3L3 7" stroke="#999" strokeWidth="1" /></Svg>
            </Corner>
            <IconButton $w={28} $h={36} aria-label="二维控制盘">
              <Svg w={28} h={26}>
                <path d="M20 13V2h-9a9 9 0 0 0 0 18" stroke="#999" fill="#f4f4f4" strokeWidth="1.300" />
                <circle cx="11" cy="11" r="4.500" stroke="#999" strokeWidth="1.300" />
                <text x="13" y="24" fontSize="10" fill="#4a8fc4" stroke="none" fontFamily="Liberation Sans, sans-serif">2D</text>
              </Svg>
            </IconButton>
            <Caret c="#999" />
            <NavRule />
            <IconButton $w={28} $h={26} aria-label="区域放大">
              <Svg w={20} h={18}>
                <path d="M3 1h10v11H3z" fill="#a8d59a" stroke="#7fa574" />
                <circle cx="13" cy="11" r="3.500" fill="#f6f6f6" stroke="#888" strokeWidth="1.200" />
                <path d="M15.500 13.500l3 3" stroke="#888" />
              </Svg>
            </IconButton>
            <IconButton $w={28} $h={14} aria-label="缩放选项"><Caret c="#999" /></IconButton>
            <Corner aria-label="导航栏选项">
              <Svg w={10} h={10}><circle cx="5" cy="5" r="4" stroke="#999" strokeWidth="1" /><path d="M3 5h4" stroke="#999" /></Svg>
            </Corner>
          </NavBar>
          <Track $spread>
            <UpArrow />
            <Thumb $h={20}><Grip /></Thumb>
            <Svg w={10} h={10}><path d="M1 7h8l-3 3H4z" fill="#222" stroke="none" /></Svg>
          </Track>
        </CanvasFrame>

        <Properties>
          <PaneTitle>
            <h2>属性</h2>
            <CloseButton aria-label="关闭属性"><SmallCross /></CloseButton>
          </PaneTitle>
          <PropertiesBody>
            <TypeSelector>
              <CourtThumb />
              <span>篮球场</span>
              <Svg w={10} h={6}><path d="M0 0h10L5 5z" fill="#333" stroke="none" /></Svg>
            </TypeSelector>
            <InstanceRow>
              <InstanceSelect aria-label="实例" defaultValue="a">
                <option value="a">新建 场地</option>
              </InstanceSelect>
              <EditType>
                <Svg w={17} h={17}>
                  <path d="M1 4l2-2h4v5l-1 1H1zM9 4l2-2h5v5M1 10h6v5H1zM9 7h7v9H9z" fill="#f4f6f8" strokeWidth="1.200" />
                  <path d="M11 9h3v2h-3zM11 13h3" stroke={BLUE} strokeWidth="1" />
                </Svg>
                编辑类型
              </EditType>
            </InstanceRow>
            <PropTable>
              <tbody>
                <tr><GroupHead colSpan={2}><div>限制条件<Chevrons /></div></GroupHead></tr>
                <tr>
                  <PropName scope="row"><div>标高</div></PropName>
                  <PropCell><ValueInput $active defaultValue="室外地坪" aria-label="标高" /></PropCell>
                </tr>
                <tr>
                  <PropName scope="row" $off><div>主体</div></PropName>
                  <PropCell $off><div>标高 : 室外地坪</div></PropCell>
                </tr>
                <tr>
                  <PropName scope="row"><div>偏移量</div></PropName>
                  <PropCell><ValueInput defaultValue="0.0" aria-label="偏移量" /></PropCell>
                </tr>
                <tr>
                  <PropName scope="row"><div>与邻近图元一同...</div></PropName>
                  <PropCell><div><Check type="checkbox" $s={13} aria-label="与邻近图元一同移动" /></div></PropCell>
                </tr>
                <tr><GroupHead colSpan={2}><div>标识数据<Chevrons /></div></GroupHead></tr>
                <tr>
                  <PropName scope="row"><div>注释</div></PropName>
                  <PropCell><ValueInput aria-label="注释" /></PropCell>
                </tr>
                <tr>
                  <PropName scope="row" $off><div>标记</div></PropName>
                  <PropCell><ValueInput aria-label="标记" /></PropCell>
                </tr>
              </tbody>
            </PropTable>
          </PropertiesBody>
        </Properties>
      </Workspace>
    </Page>
  );
}
